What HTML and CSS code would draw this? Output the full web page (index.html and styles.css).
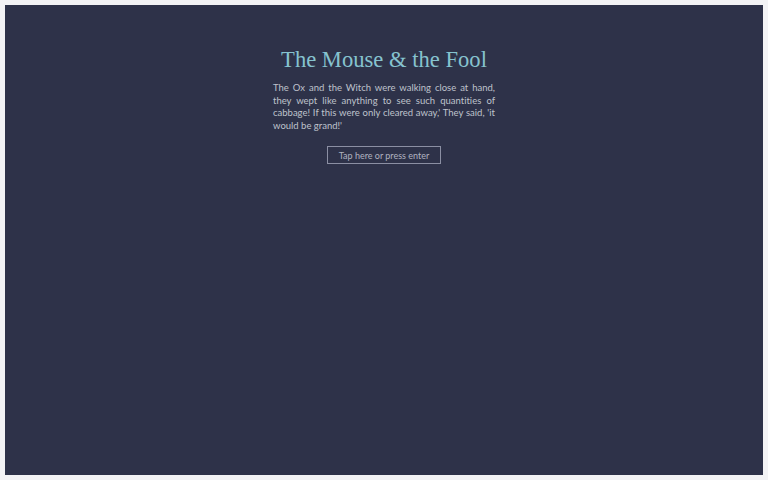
FILE: index.html
```html
<!DOCTYPE html>
<html>
<head>
<meta charset="utf-8">
<link rel="stylesheet" href="styles.css">
</head>
<body>
<main class="stage">
  <section class="story">
    <h1 class="title">The Mouse &amp; the Fool</h1>
    <p class="text">The Ox and the Witch were walking close at hand, they wept like anything to see such quantities of cabbage! If this were only cleared away,' They said, 'it would be grand!'</p>
    <button class="cta">Tap here or press enter</button>
  </section>
</main>
</body>
</html>
```
FILE: styles.css
```css
html, body {
  margin: 0;
  padding: 0;
  background: #f3f3f5;
}
body {
  padding: 5px;
  height: 480px;
  box-sizing: border-box;
}
.stage {
  background: #2e3249;
  height: 470px;
  width: 758px;
  display: flex;
  justify-content: center;
}
.story {
  width: 222px;
  padding-top: 41px;
  display: flex;
  flex-direction: column;
  align-items: center;
}
.title {
  margin: 0;
  font-family: "Liberation Serif", serif;
  font-weight: normal;
  font-size: 22.6px;
  line-height: 28px;
  color: #86c3cf;
  white-space: nowrap;
}
.text {
  margin: 8px 0 0;
  font-family: "Lato", sans-serif;
  font-weight: 400;
  font-variant-ligatures: none;
  font-size: 9.5px;
  line-height: 12.6px;
  color: #bfc2cc;
  text-align: justify;
}
.cta {
  margin-top: 14px;
  background: transparent;
  border: 1px solid #8b8fa3;
  color: #b0b3c0;
  font-family: "Lato", sans-serif;
  font-weight: 400;
  font-size: 9px;
  height: 18px;
  width: 114px;
  padding: 0;
}
```
